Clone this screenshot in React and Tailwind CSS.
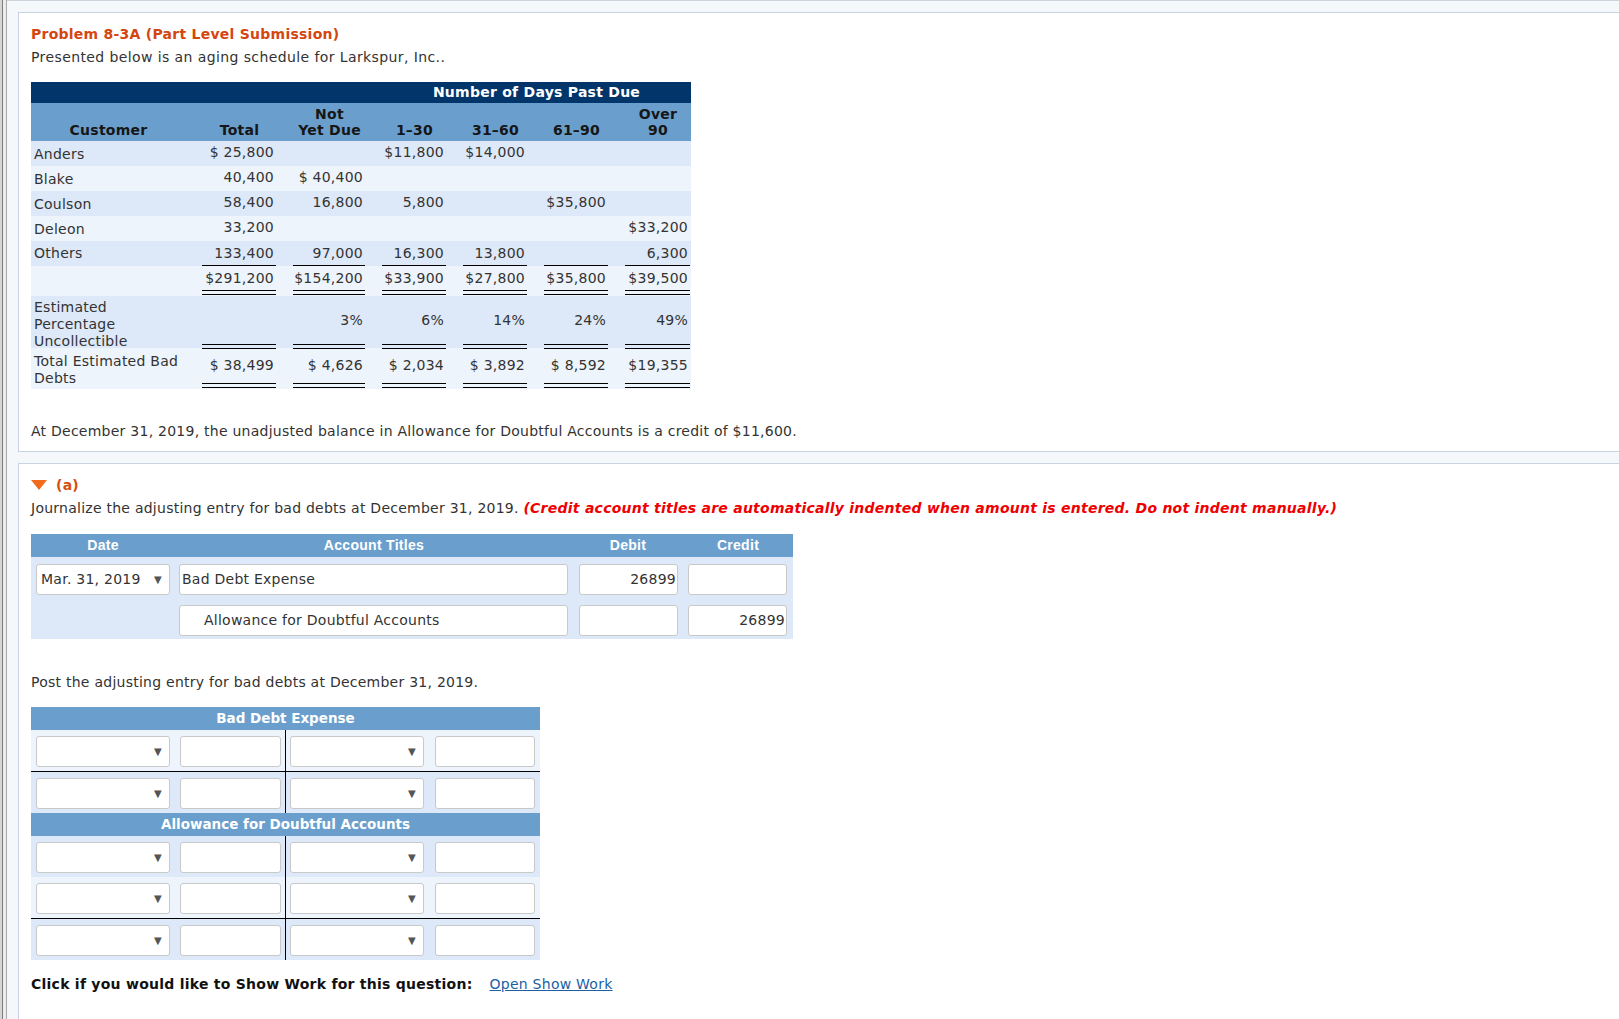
import React from 'react';

const DARK = 'bg-[#dde8f8]';
const LIGHT = 'bg-[#eef4fc]';

const aging = [
  ['Anders', '$ 25,800', '', '$11,800', '$14,000', '', ''],
  ['Blake', '40,400', '$ 40,400', '', '', '', ''],
  ['Coulson', '58,400', '16,800', '5,800', '', '$35,800', ''],
  ['Deleon', '33,200', '', '', '', '', '$33,200'],
];

const cols = 'grid grid-cols-[155px_91px_89px_81px_81px_81px_82px]';
const jcols = 'grid grid-cols-[144px_398px_110px_110px]';

const NumCell = ({ value, line }) => (
  <div className="pl-[16px] pr-[1px] flex flex-col h-full">
    <div
      className={`flex-1 flex items-center justify-end pr-[2px] whitespace-nowrap ${
        line === 'single' ? 'border-b border-black' : line ? '' : 'pb-[2px]'
      }`}
    >
      {value}
    </div>
    {line === 'double' && <div className="h-[5px] border-y border-black mb-[1px]" />}
  </div>
);

const AgingRow = ({ cells, bg, h, line, pt }) => (
  <div className={`${cols} ${bg} ${h}`}>
    <div className={`pl-[3px] flex leading-[17px] whitespace-nowrap ${pt ? `items-start ${pt}` : line ? 'items-center' : 'items-center pt-[2px]'}`}>
      {cells[0]}
    </div>
    {cells.slice(1).map((v, i) => (
      <NumCell key={i} value={v} line={line} />
    ))}
  </div>
);

const Select = ({ w, text }) => (
  <div className={`${w} h-[31px] bg-white border border-[#c9c9c9] rounded-[3px] flex items-center justify-between pl-[4px] pr-[7px]`}>
    <span className="whitespace-nowrap">{text}</span>
    <span className="text-[10px] text-[#555]">▼</span>
  </div>
);

const Input = ({ w, text, indent, right }) => (
  <div className={`${w} h-[31px] bg-white border border-[#c9c9c9] rounded-[3px] flex items-center whitespace-nowrap ${right ? 'justify-end pr-[1px]' : indent ? 'pl-[24px]' : 'pl-[2px]'}`}>
    {text}
  </div>
);

const TRow = ({ bg, line }) => (
  <div className={`flex ${bg} ${line ? 'border-b border-black' : ''}`}>
    <div className="w-[255px] h-[41px] border-r border-black flex items-start pt-[6px] pl-[5px] gap-[10px]">
      <Select w="w-[134px]" text="" />
      <Input w="w-[101px]" text="" />
    </div>
    <div className="w-[254px] h-[41px] flex items-start pt-[6px] pl-[4px] gap-[11px]">
      <Select w="w-[134px]" text="" />
      <Input w="w-[100px]" text="" />
    </div>
  </div>
);

const THead = ({ title }) => (
  <div className="h-[23px] bg-[#6a9fcd] text-white font-bold text-[13.5px] tracking-normal flex items-center justify-center">{title}</div>
);

export default function App() {
  return (
    <div className="min-h-screen flex bg-[#f5f8fb] font-['DejaVu_Sans',sans-serif] text-[14px] tracking-[0.25px] text-[#333]">
      {/* window frame */}
      <div className="flex shrink-0">
        <div className="w-[2px] bg-[#d6d6d6]" />
        <div className="w-[1px] bg-[#7d7d7d]" />
        <div className="w-[3px] bg-[#ececec]" />
        <div className="w-[1px] bg-[#a9a9a9]" />
      </div>

      <div className="flex-1 border-t border-[#cdd3dc] pt-[11px] pl-[11px] flex flex-col gap-[11px] overflow-hidden">
        {/* Problem card */}
        <div className="bg-white border-y border-l border-[#c9d3e3] pl-[12px] pt-[13px] pb-[11px]">
          <div className="text-[#d4460f] font-bold leading-[17px]">Problem 8-3A (Part Level Submission)</div>
          <div className="mt-[6px] leading-[17px] tracking-[0.4px]">Presented below is an aging schedule for Larkspur, Inc..</div>

          <div className="mt-[16px] w-[660px]">
            <div className={`${cols} h-[21px] bg-[#02356a] text-white font-bold`}>
              <div className="col-span-3" />
              <div className="col-span-4 pl-[16px] flex items-center justify-center">Number of Days Past Due</div>
            </div>
            <div className={`${cols} h-[38px] bg-[#6a9fcd] text-[#161616] font-bold leading-[16px]`}>
              <div className="flex items-end justify-center pb-[3px]">Customer</div>
              {['Total', 'Not\nYet Due', '1–30', '31–60', '61–90', 'Over\n90'].map((t) => (
                <div key={t} className="pl-[16px] flex items-end justify-center pb-[3px] text-center whitespace-pre-line">
                  {t}
                </div>
              ))}
            </div>
            {aging.map((r, i) => (
              <AgingRow key={r[0]} cells={r} bg={i % 2 === 0 ? DARK : LIGHT} h="h-[25px]" />
            ))}
            <AgingRow cells={['Others', '133,400', '97,000', '16,300', '13,800', '', '6,300']} bg={DARK} h="h-[25px]" line="single" />
            <AgingRow cells={['', '$291,200', '$154,200', '$33,900', '$27,800', '$35,800', '$39,500']} bg={LIGHT} h="h-[30px]" line="double" />
            <AgingRow
              cells={[<span key="e">Estimated<br />Percentage<br />Uncollectible</span>, '', '3%', '6%', '14%', '24%', '49%']}
              bg={DARK}
              h="h-[52px]"
              line="double"
              pt="pt-[3px]"
            />
            <AgingRow
              cells={[<span key="t">Total Estimated Bad<br />Debts</span>, '$ 38,499', '$ 4,626', '$ 2,034', '$ 3,892', '$ 8,592', '$19,355']}
              bg={LIGHT}
              h="h-[41px]"
              line="double"
              pt="pt-[5px]"
            />
          </div>

          <div className="mt-[34px] leading-[17px]">
            At December 31, 2019, the unadjusted balance in Allowance for Doubtful Accounts is a credit of $11,600.
          </div>
        </div>

        {/* Part (a) card */}
        <div className="flex-1 bg-white border-t border-l border-[#c9d3e3] pl-[12px] pt-[12px]">
          <div className="flex items-center gap-[9px] h-[18px]">
            <svg width="16" height="10" viewBox="0 0 16 10">
              <path d="M0 0 H16 L8 10 Z" fill="#f26a1c" />
            </svg>
            <span className="text-[#d4500f] font-bold">(a)</span>
          </div>
          <div className="mt-[6px] leading-[17px]">
            Journalize the adjusting entry for bad debts at December 31, 2019.{' '}
            <span className="text-[#ee0000] font-bold italic">
              (Credit account titles are automatically indented when amount is entered. Do not indent manually.)
            </span>
          </div>

          {/* journal */}
          <div className="mt-[17px] w-[762px]">
            <div className={`${jcols} h-[23px] bg-[#6a9fcd] text-white font-bold font-['Liberation_Sans',sans-serif] tracking-[0.3px]`}>
              <div className="flex items-center justify-center">Date</div>
              <div className="flex items-center justify-center">Account Titles</div>
              <div className="flex items-center justify-center">Debit</div>
              <div className="flex items-center justify-center">Credit</div>
            </div>
            <div className={DARK}>
              <div className={`${jcols} h-[41px] pt-[7px]`}>
                <div className="pl-[5px]"><Select w="w-[134px]" text="Mar. 31, 2019" /></div>
                <div className="pl-[4px]"><Input w="w-[389px]" text="Bad Debt Expense" /></div>
                <div className="pl-[6px]"><Input w="w-[99px]" text="26899" right /></div>
                <div className="pl-[5px]"><Input w="w-[99px]" text="" /></div>
              </div>
              <div className={`${jcols} h-[41px] pt-[7px]`}>
                <div />
                <div className="pl-[4px]"><Input w="w-[389px]" text="Allowance for Doubtful Accounts" indent /></div>
                <div className="pl-[6px]"><Input w="w-[99px]" text="" /></div>
                <div className="pl-[5px]"><Input w="w-[99px]" text="26899" right /></div>
              </div>
            </div>
          </div>

          <div className="mt-[35px] leading-[17px]">Post the adjusting entry for bad debts at December 31, 2019.</div>

          {/* T accounts */}
          <div className="mt-[16px] w-[509px]">
            <THead title="Bad Debt Expense" />
            <TRow bg={LIGHT} line />
            <TRow bg={DARK} />
            <THead title="Allowance for Doubtful Accounts" />
            <TRow bg={DARK} />
            <TRow bg={LIGHT} line />
            <TRow bg={DARK} />
          </div>

          <div className="mt-[16px] leading-[17px] flex gap-[17px]">
            <span className="font-bold text-[#111]">Click if you would like to Show Work for this question:</span>
            <span className="text-[#1c5fa3] underline">Open Show Work</span>
          </div>
        </div>
      </div>
    </div>
  );
}
